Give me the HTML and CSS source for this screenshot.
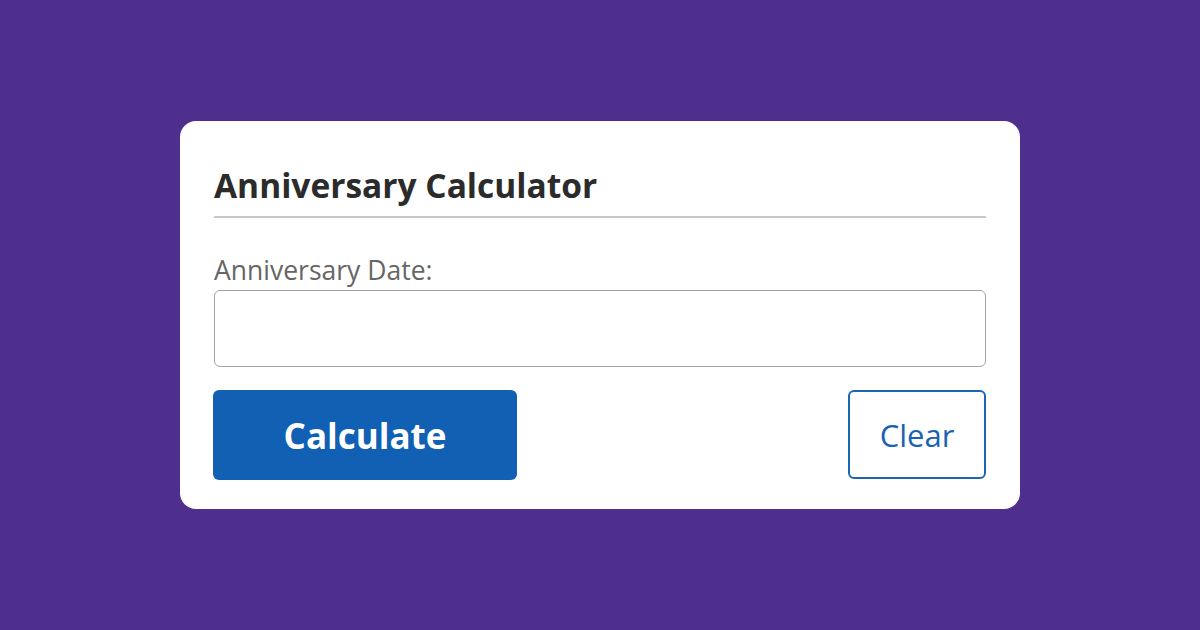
FILE: index.html
```html
<!DOCTYPE html>
<html>
<head>
<meta charset="utf-8">
<link rel="stylesheet" href="styles.css">
</head>
<body>
<div class="card">
  <h1 class="title">Anniversary Calculator</h1>
  <div class="divider"></div>
  <label class="label" for="date">Anniversary Date:</label>
  <input class="input" id="date" type="text">
  <div class="actions">
    <button class="btn-primary">Calculate</button>
    <button class="btn-secondary">Clear</button>
  </div>
</div>
</body>
</html>
```
FILE: styles.css
```css
html, body { margin: 0; padding: 0; }
body {
  width: 1200px; height: 630px;
  background: #4e2f8e;
  display: flex; align-items: center; justify-content: center;
  font-family: "Open Sans", "Noto Sans", sans-serif;
}
.card {
  box-sizing: border-box;
  width: 840px; height: 388px;
  background: #fff;
  border-radius: 16px;
  padding: 44px 34px 0 34px;
  display: flex; flex-direction: column;
}
.title {
  margin: 0;
  font-size: 33.5px; line-height: 40px;
  font-weight: 700; color: #2b2b2b;
}
.divider { height: 2px; background: #c8c8c8; margin-top: 11px; }
.label {
  margin-top: 37px;
  font-size: 26.5px; line-height: 30px;
  color: #666;
}
.input {
  box-sizing: border-box;
  margin: 5px 0 0 0;
  height: 77px; width: 100%;
  border: 1.5px solid #a3a3a3;
  border-radius: 6px;
  outline: none;
}
.actions {
  margin-top: 23px;
  display: flex; justify-content: space-between; align-items: flex-start;
}
.btn-primary {
  width: 304px; height: 90px;
  margin-left: -1px;
  background: #1160b4; color: #fff;
  border: none; border-radius: 6px;
  font-family: inherit; font-weight: 700; font-size: 35px;
}
.btn-secondary {
  box-sizing: border-box;
  width: 138px; height: 89px;
  background: #fff; color: #1a62b2;
  border: 2px solid #1a66b5; border-radius: 6px;
  font-family: inherit; font-size: 31px;
}
```
